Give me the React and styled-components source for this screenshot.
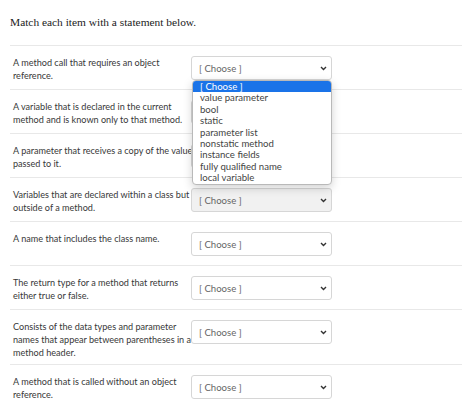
import React from 'react';
import styled, { createGlobalStyle } from 'styled-components';

const GlobalStyle = createGlobalStyle`
  body {
    margin: 0;
    background: #ffffff;
    font-family: Lato, "Liberation Sans", sans-serif;
  }
`;

const items = [
  ['A method call that requires an object', 'reference.'],
  ['A variable that is declared in the current', 'method and is known only to that method.'],
  ['A parameter that receives a copy of the value', 'passed to it.'],
  ['Variables that are declared within a class but', 'outside of a method.'],
  ['A name that includes the class name.'],
  ['The return type for a method that returns', 'either true or false.'],
  ['Consists of the data types and parameter', 'names that appear between parentheses in a', 'method header.'],
  ['A method that is called without an object', 'reference.'],
];

const options = [
  '[ Choose ]',
  'value parameter',
  'bool',
  'static',
  'parameter list',
  'nonstatic method',
  'instance fields',
  'fully qualified name',
  'local variable',
];

const Chevron = () => (
  <svg width="7" height="5" viewBox="0 0 7 5">
    <path d="M1 1 L3.5 3.5 L6 1" fill="none" stroke="#333" strokeWidth="1.4" />
  </svg>
);

const App = () => {
  return (
    <>
      <GlobalStyle />
      <Page>
        <Title>Match each item with a statement below.</Title>
        <List>
          {items.map((lines, i) => (
            <Row key={i}>
              <Statement>
                {lines.map((l, j) => (
                  <div key={j}>{l}</div>
                ))}
              </Statement>
              <SelectWrap>
                <Select $dim={i === 3}>
                  <span>[ Choose ]</span>
                  <Chevron />
                </Select>
                {i === 0 && (
                  <Menu>
                    {options.map((o, k) => (
                      <Option key={k} $active={k === 0}>{o}</Option>
                    ))}
                  </Menu>
                )}
              </SelectWrap>
            </Row>
          ))}
        </List>
      </Page>
    </>
  );
};

const Page = styled.div`
  width: 452px;
  padding: 14px 0 0 10px;
`;

const Title = styled.div`
  font-family: "Liberation Serif", "Times New Roman", serif;
  font-size: 11.4px;
  color: #222;
  line-height: 16px;
  margin-bottom: 15px;
`;

const List = styled.div`
  display: flex;
  flex-direction: column;
`;

const Row = styled.div`
  display: flex;
  align-items: flex-start;
  border-top: 1px solid #e8e8e8;
  padding: 10px 0 5px 3px;
`;

const Statement = styled.div`
  width: 178px;
  font-size: 9.1px;
  line-height: 13px;
  color: #383838;
  white-space: nowrap;
`;

const SelectWrap = styled.div`
  position: relative;
  margin-bottom: 4px;
`;

const Select = styled.div`
  height: 22px;
  box-sizing: content-box;
  border: 1px solid #d6d6d6;
  border-radius: 3px;
  background: ${(p) => (p.$dim ? '#f1f1f1' : '#ffffff')};
  display: flex;
  align-items: center;
  justify-content: space-between;
  padding: 0 4px 0 7px;
  width: 128px;
  font-size: 9.6px;
  color: #666;
`;

const Menu = styled.div`
  position: absolute;
  top: 24px;
  left: 1px;
  width: 138px;
  background: #fff;
  border: 1px solid #b9b9b9;
  border-radius: 4px;
  box-shadow: 0 3px 10px rgba(0, 0, 0, 0.18);
  overflow: hidden;
  z-index: 2;
`;

const Option = styled.div`
  height: 11.4px;
  line-height: 11.4px;
  font-size: 9.6px;
  padding-left: 7px;
  color: ${(p) => (p.$active ? '#ffffff' : '#444')};
  background: ${(p) => (p.$active ? '#1a73e8' : 'transparent')};
`;

export default App;
